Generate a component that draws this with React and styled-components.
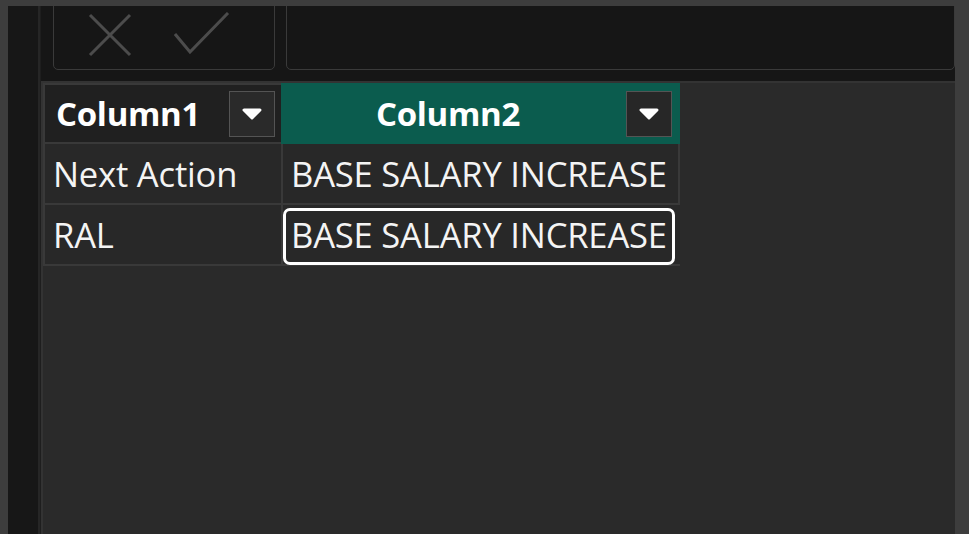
import React from "react";
import styled, { createGlobalStyle } from "styled-components";

const Global = createGlobalStyle`
  html, body { margin: 0; padding: 0; background: #3c3c3c; }
  body { font-family: "Open Sans", "Noto Sans", sans-serif; }
  #root { width: 969px; height: 534px; overflow: hidden; }
`;

const Frame = styled.div`
  width: 969px;
  height: 534px;
  box-sizing: border-box;
  padding: 6px 14px 0 8px;
  background: #3d3d3d;
  display: flex;
`;

const SideStrip = styled.div`
  width: 30px;
  background: #171717;
  border-right: 2px solid #262626;
`;

const Main = styled.div`
  flex: 1;
  display: flex;
  flex-direction: column;
  min-width: 0;
  background: #161616;
  border-left: 1px solid #1e1e1e;
`;

const FormulaBar = styled.div`
  height: 75px;
  flex: none;
  display: flex;
  gap: 11px;
  padding-left: 12px;
  overflow: hidden;
  background: #161616;
`;

const FormulaBox = styled.div`
  box-sizing: border-box;
  margin-top: -8px;
  height: 72px;
  width: ${(p) => (p.$grow ? "auto" : "222px")};
  flex: ${(p) => (p.$grow ? "1" : "none")};
  border: 1px solid #3a3a3a;
  border-radius: 5px;
  display: flex;
  align-items: center;
  padding-left: 34px;
  gap: 44px;
`;

const Sheet = styled.div`
  flex: 1;
  background: #2a2a2a;
  border-top: 2px solid #333333;
  border-left: 2px solid #333333;
`;

const Table = styled.div`
  display: grid;
  grid-template-columns: 238px 399px;
  grid-auto-rows: 61px;
`;

const HeaderCell = styled.div`
  position: relative;
  box-sizing: border-box;
  display: flex;
  align-items: center;
  background: ${(p) => (p.$active ? "#0b5c4e" : "#202020")};
  border: 2px solid ${(p) => (p.$active ? "#0b5c4e" : "#393939")};
  border-right-width: ${(p) => (p.$active ? "2px" : "0")};
  padding: 0 6px 0 11px;
`;

const HeaderLabel = styled.span`
  flex: 1;
  font-family: "Open Sans", "Noto Sans", sans-serif;
  font-weight: 700;
  font-size: 33px;
  letter-spacing: -0.3px;
  color: #ffffff;
  text-align: ${(p) => (p.$center ? "center" : "left")};
  padding-right: ${(p) => (p.$center ? "24px" : "0")};
  line-height: 1;
  padding-top: 0px;
`;

const DropButton = styled.div`
  box-sizing: border-box;
  width: 46px;
  height: 46px;
  flex: none;
  background: ${(p) => (p.$dark ? "#272727" : "#2a2a2a")};
  border: 1.5px solid #545454;
  display: flex;
  align-items: center;
  justify-content: center;
`;

const Cell = styled.div`
  position: relative;
  box-sizing: border-box;
  display: flex;
  align-items: center;
  background: #282828;
  border-left: 2px solid #393939;
  border-bottom: 2px solid #393939;
  border-right: ${(p) => (p.$last ? "2px solid #393939" : "0")};
  padding: 1px 0 0 8px;
  font-family: "Open Sans", "Noto Sans", sans-serif;
  font-size: 34.6px;
  letter-spacing: -0.2px;
  color: #f4f4f4;
  white-space: nowrap;
  line-height: 1;
`;

const Selection = styled.div`
  position: absolute;
  left: 0;
  right: 5px;
  top: 3px;
  bottom: -1px;
  border: 3px solid #ffffff;
  border-radius: 7px;
  pointer-events: none;
`;

const CancelIcon = () => (
  <svg width="44" height="44" viewBox="0 0 44 44" style={{ marginTop: "2px" }}>
    <path d="M2 2 L42 42 M42 2 L2 42" stroke="#4c4c4c" strokeWidth="3" fill="none" />
  </svg>
);

const CheckIcon = () => (
  <svg width="56" height="44" viewBox="0 0 56 44" style={{ marginLeft: "-2px" }}>
    <path d="M1 22 L16 40 L54 1" stroke="#4c4c4c" strokeWidth="3" fill="none" strokeLinejoin="miter" />
  </svg>
);

const Caret = () => (
  <svg width="20" height="12" viewBox="0 0 20 12">
    <path d="M2 2 L18 2 L10 10 Z" fill="#ffffff" stroke="#ffffff" strokeWidth="3" strokeLinejoin="round" />
  </svg>
);

export default function App() {
  return (
    <>
      <Global />
      <Frame>
        <SideStrip />
        <Main>
          <FormulaBar>
            <FormulaBox>
              <CancelIcon />
              <CheckIcon />
            </FormulaBox>
            <FormulaBox $grow />
          </FormulaBar>
          <Sheet>
            <Table>
              <HeaderCell>
                <HeaderLabel>Column1</HeaderLabel>
                <DropButton>
                  <Caret />
                </DropButton>
              </HeaderCell>
              <HeaderCell $active>
                <HeaderLabel $center>Column2</HeaderLabel>
                <DropButton $dark>
                  <Caret />
                </DropButton>
              </HeaderCell>
              <Cell>Next Action</Cell>
              <Cell $last>BASE SALARY INCREASE</Cell>
              <Cell>RAL</Cell>
              <Cell>
                BASE SALARY INCREASE
                <Selection />
              </Cell>
            </Table>
          </Sheet>
        </Main>
      </Frame>
    </>
  );
}
